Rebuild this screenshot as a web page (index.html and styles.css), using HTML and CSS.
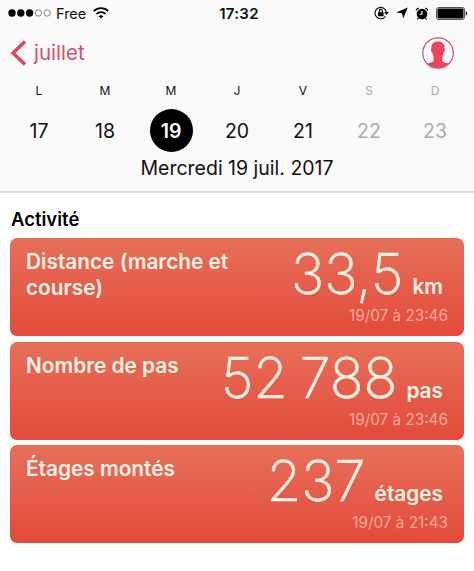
FILE: index.html
```html
<!DOCTYPE html>
<html lang="fr">
<head>
    <meta charset="UTF-8">
    <meta name="viewport" content="width=device-width, initial-scale=1.0">
    <title>Activité</title>
    <link rel="stylesheet" href="styles.css">
</head>
<body>
    <header class="header">
        <div class="status-bar">
            <div class="carrier">
                <svg class="signal" width="44" height="10" viewBox="0 0 44 10">
                    <circle cx="4" cy="5" r="3.7"/>
                    <circle cx="12.8" cy="5" r="3.7"/>
                    <circle cx="21.6" cy="5" r="3.7"/>
                    <circle class="empty" cx="30.4" cy="5" r="3.2"/>
                    <circle class="empty" cx="39.2" cy="5" r="3.2"/>
                </svg>
                <span>Free</span>
                <svg class="wifi" width="16" height="12" viewBox="0 0 16 12">
                    <path class="arc" d="M.8 4.2a10.2 10.2 0 0 1 14.4 0M3.4 7a6.5 6.5 0 0 1 9.2 0"/>
                    <path d="M5.6 9.2a3.6 3.6 0 0 1 4.8 0L8 11.6z"/>
                </svg>
            </div>
            <div class="time">17:32</div>
            <div class="indicators">
                <svg width="15" height="14" viewBox="0 0 15 14">
                    <path class="thin" d="M11.5 10.2A5.7 5.7 0 1 1 12.3 6"/>
                    <path d="M10.2 6h4.6l-2.3 2.8z"/>
                    <rect x="4" y="6.2" width="5.6" height="4" rx=".5"/>
                    <path class="thin" d="M5.2 6.5V5a1.6 1.6 0 0 1 3.2 0v1.5"/>
                </svg>
                <svg width="12" height="12" viewBox="0 0 12 12">
                    <path d="M11.8.4L7.2 11.6 6 6.2.2 5.6z"/>
                </svg>
                <svg width="14" height="13" viewBox="0 0 14 13">
                    <circle cx="7" cy="7" r="5.3"/>
                    <path class="thin" d="M1 3.6A5 5 0 0 1 3.8 1M10.2 1A5 5 0 0 1 13 3.6M3.4 11l-1.2 1.4M10.6 11l1.2 1.4"/>
                    <path class="hands" d="M7 3.8V7.3H4.5"/>
                </svg>
                <svg width="32" height="13" viewBox="0 0 32 13">
                    <rect class="case" x=".5" y=".5" width="28" height="12" rx="2"/>
                    <rect x="1.5" y="1.5" width="26" height="10" rx="1"/>
                    <path d="M29.8 4.3c1.7.5 1.7 3.9 0 4.4z"/>
                </svg>
            </div>
        </div>

        <nav class="nav-bar">
            <a class="back" href="#">
                <svg width="16" height="26" viewBox="0 0 16 26">
                    <path d="M15 1.5L3 13l12 11.5"/>
                </svg>
                <span>juillet</span>
            </a>
            <svg class="profile" width="32" height="32" viewBox="0 0 32 32">
                <circle cx="16" cy="16" r="15.2"/>
                <path d="M16 4.5c-4.9 0-7 2.700-6.500 7-1 .4-.5 3.500.9 4.200.3 1.700.700 2.600 1.100 3.300v4.500c0 1.600-3.100 2-6.400 3 2.700 2.700 6.600 4.400 10.900 4.400s8.200-1.700 10.900-4.400c-3.300-1-6.400-1.400-6.400-3v-4.500c.4-.7.8-1.600 1.100-3.300 1.400-.7 1.900-3.800.9-4.200.5-4.300-1.600-7-6.500-7z"/>
            </svg>
        </nav>

        <div class="week">
            <div class="day"><span class="letter">L</span><span class="number">17</span></div>
            <div class="day"><span class="letter">M</span><span class="number">18</span></div>
            <div class="day selected"><span class="letter">M</span><span class="number">19</span></div>
            <div class="day"><span class="letter">J</span><span class="number">20</span></div>
            <div class="day"><span class="letter">V</span><span class="number">21</span></div>
            <div class="day weekend"><span class="letter">S</span><span class="number">22</span></div>
            <div class="day weekend"><span class="letter">D</span><span class="number">23</span></div>
        </div>
        <div class="full-date">Mercredi 19 juil. 2017</div>
    </header>

    <main class="content">
        <h2>Activité</h2>
        <div class="card">
            <h3>Distance (marche et course)</h3>
            <div class="data">
                <div class="value"><span class="amount">33,5</span><span class="unit">km</span></div>
                <div class="updated">19/07 à 23:46</div>
            </div>
        </div>
        <div class="card">
            <h3>Nombre de pas</h3>
            <div class="data">
                <div class="value"><span class="amount">52 788</span><span class="unit">pas</span></div>
                <div class="updated">19/07 à 23:46</div>
            </div>
        </div>
        <div class="card">
            <h3>Étages montés</h3>
            <div class="data">
                <div class="value"><span class="amount">237</span><span class="unit">étages</span></div>
                <div class="updated">19/07 à 21:43</div>
            </div>
        </div>
    </main>
</body>
</html>
```
FILE: styles.css
```css
* {
    box-sizing: border-box;
    margin: 0;
    padding: 0;
}

body {
    font-family: Inter, "Liberation Sans", sans-serif;
    background-color: #fff;
    color: #111;
}

svg {
    display: block;
    flex: none;
}

.header {
    height: 193px;
    background-color: #f9f9f9;
    border-bottom: 2px solid #dcdcdc;
}

.status-bar {
    display: grid;
    grid-template-columns: 1fr auto 1fr;
    align-items: center;
    height: 26px;
    padding: 0 6px 0 8px;
    font-size: 14.5px;
}

.carrier {
    display: flex;
    align-items: center;
    gap: 4px;
}

.signal .empty {
    fill: none;
    stroke: #777;
    stroke-width: 0.9;
}

.wifi {
    margin-left: 3px;
}

.wifi .arc {
    fill: none;
    stroke: #000;
    stroke-width: 1.7;
}

.time {
    padding-left: 2px;
    font-size: 15px;
    font-weight: 600;
    letter-spacing: 0.3px;
}

.indicators {
    display: flex;
    align-items: center;
    justify-content: flex-end;
    gap: 7px;
}

.thin {
    fill: none;
    stroke: #000;
    stroke-width: 1.1;
}

.hands {
    fill: none;
    stroke: #fff;
    stroke-width: 1.1;
}

.case {
    fill: #fff;
    stroke: #555;
}

.nav-bar {
    display: flex;
    align-items: center;
    justify-content: space-between;
    height: 53px;
    padding: 0 20px 0 10px;
}

.back {
    display: flex;
    align-items: center;
    gap: 8px;
    color: #d2506c;
    font-size: 20.5px;
    text-decoration: none;
}

.back path {
    fill: none;
    stroke: #dc4764;
    stroke-width: 3.5;
}

.profile circle {
    fill: #fff;
    stroke: #c5566e;
    stroke-width: 1.2;
}

.profile path {
    fill: #ee4460;
}

.week {
    display: grid;
    grid-template-columns: repeat(7, 66px);
    justify-content: center;
}

.day {
    display: flex;
    flex-direction: column;
    align-items: center;
}

.letter {
    height: 30px;
    font-size: 12px;
    line-height: 24px;
}

.number {
    width: 43px;
    height: 43px;
    font-size: 19.5px;
    line-height: 44px;
    text-align: center;
}

.selected .number {
    border-radius: 50%;
    background-color: #000;
    color: #fff;
    font-weight: 600;
}

.weekend {
    color: #aaa;
}

.full-date {
    font-size: 19.5px;
    line-height: 33px;
    text-align: center;
}

.content {
    padding: 14px 10px 0;
}

h2 {
    height: 31px;
    padding-left: 1px;
    font-size: 18.5px;
    font-weight: 600;
    line-height: 25px;
    color: #000;
}

.card {
    display: flex;
    justify-content: space-between;
    height: 98px;
    margin-bottom: 5.5px;
    padding: 10px 16px 0;
    border-radius: 7px;
    background: linear-gradient(#e67059, #e34a3b);
    color: #fff3e6;
}

h3 {
    width: 210px;
    margin-right: -20px;
    padding-top: 1px;
    font-size: 20.8px;
    font-weight: 600;
    line-height: 26px;
}

.data {
    display: flex;
    flex-direction: column;
    align-items: flex-end;
}

.value {
    display: flex;
    align-items: baseline;
    gap: 9px;
    height: 58px;
    padding-right: 5px;
    line-height: 53px;
    white-space: nowrap;
}

.amount {
    font-size: 56px;
    font-weight: 200;
    word-spacing: -4px;
    -webkit-text-stroke: 0.6px #fff3e6;
}

.unit {
    font-size: 20.8px;
    font-weight: 600;
}

.updated {
    font-size: 15.3px;
    line-height: 20px;
    color: #f5ab99;
}
```
